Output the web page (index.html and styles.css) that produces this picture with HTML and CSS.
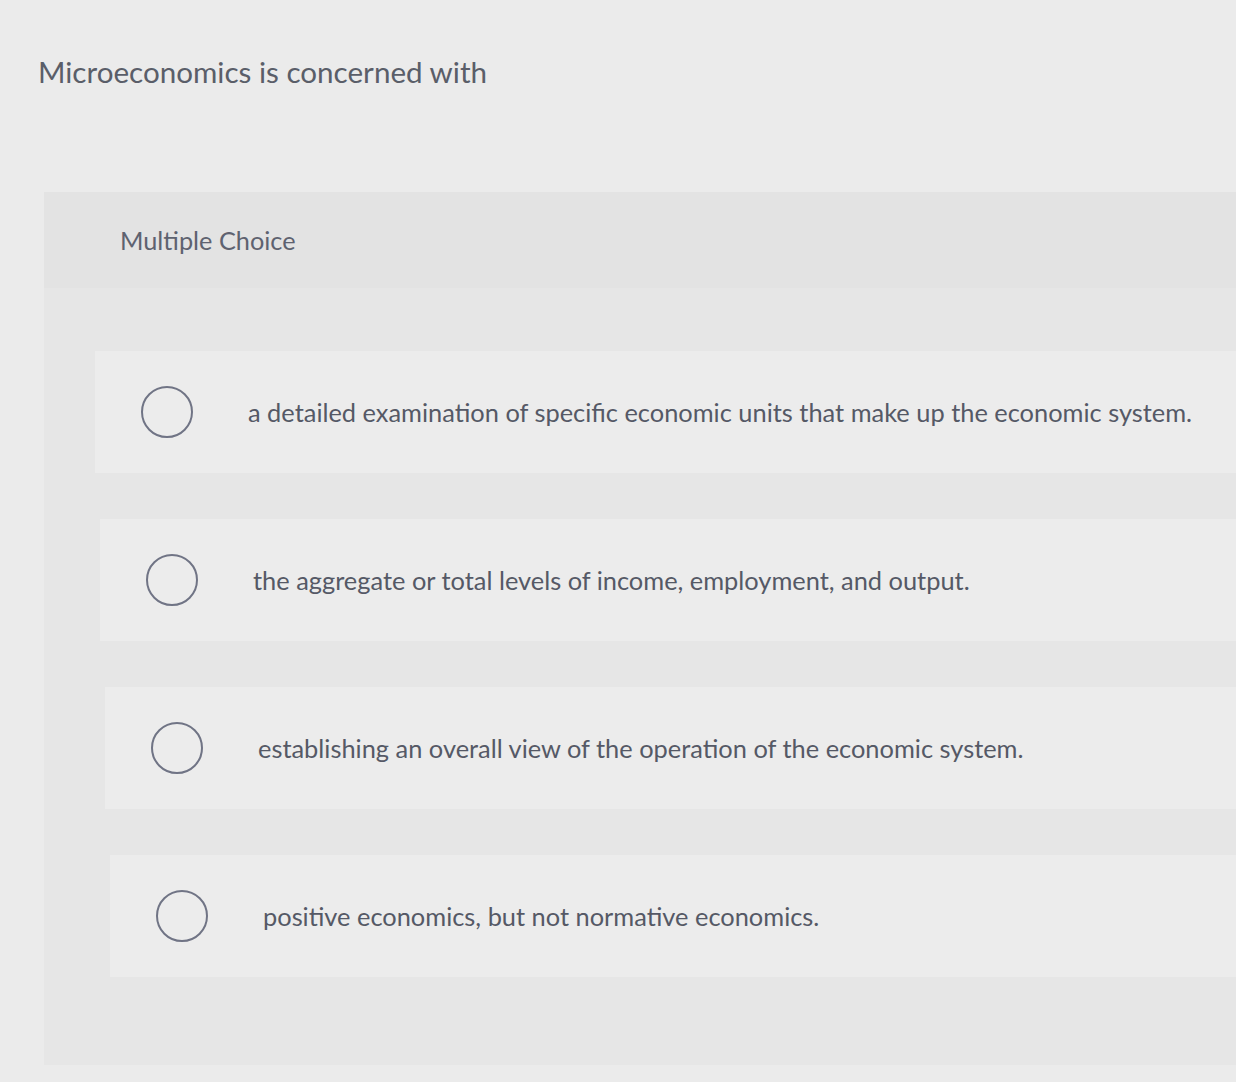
FILE: index.html
```html
<!DOCTYPE html>
<html>
<head>
<meta charset="utf-8">
<link rel="stylesheet" href="styles.css">
</head>
<body>
<div class="page">
  <h1 class="question">Microeconomics is concerned with</h1>
  <div class="panel">
    <div class="panel-head">Multiple Choice</div>
    <div class="options">
      <div class="option o1"><span class="radio"></span><span class="label">a detailed examination of specific economic units that make up the economic system.</span></div>
      <div class="option o2"><span class="radio"></span><span class="label">the aggregate or total levels of income, employment, and output.</span></div>
      <div class="option o3"><span class="radio"></span><span class="label">establishing an overall view of the operation of the economic system.</span></div>
      <div class="option o4"><span class="radio"></span><span class="label">positive economics, but not normative economics.</span></div>
    </div>
  </div>
</div>
</body>
</html>
```

FILE: styles.css
```css
html, body {
  margin: 0;
  padding: 0;
}
body {
  background: #ebebeb;
  font-family: "Lato", "Open Sans", sans-serif;
  color: #585c68;
  width: 1236px;
  height: 1082px;
  overflow: hidden;
}
.page {
  padding-top: 52px;
}
.question {
  margin: 0 0 0 38px;
  font-size: 29.6px;
  font-weight: 400;
  line-height: 40px;
  color: #5a5e69;
}
.panel {
  margin: 100px 0 0 44px;
  background: #e6e6e6;
  height: 873px;
}
.panel-head {
  height: 96px;
  display: flex;
  align-items: center;
  padding-left: 76px;
  font-size: 25.3px;
  color: #5e6270;
  background: #e3e3e3;
}
.options {
  padding-top: 63px;
  display: flex;
  flex-direction: column;
  gap: 46px;
}
.option {
  margin-left: 51px;
  height: 122px;
  background: #ececec;
  display: flex;
  align-items: center;
  padding-left: 46px;
}
.o2 { margin-left: 56px; }
.o3 { margin-left: 61px; }
.o4 { margin-left: 66px; }
.radio {
  width: 48px;
  height: 48px;
  border: 2px solid #707485;
  border-radius: 50%;
  flex: none;
}
.label {
  margin-left: 55px;
  font-size: 25.4px;
  color: #555966;
}
```
